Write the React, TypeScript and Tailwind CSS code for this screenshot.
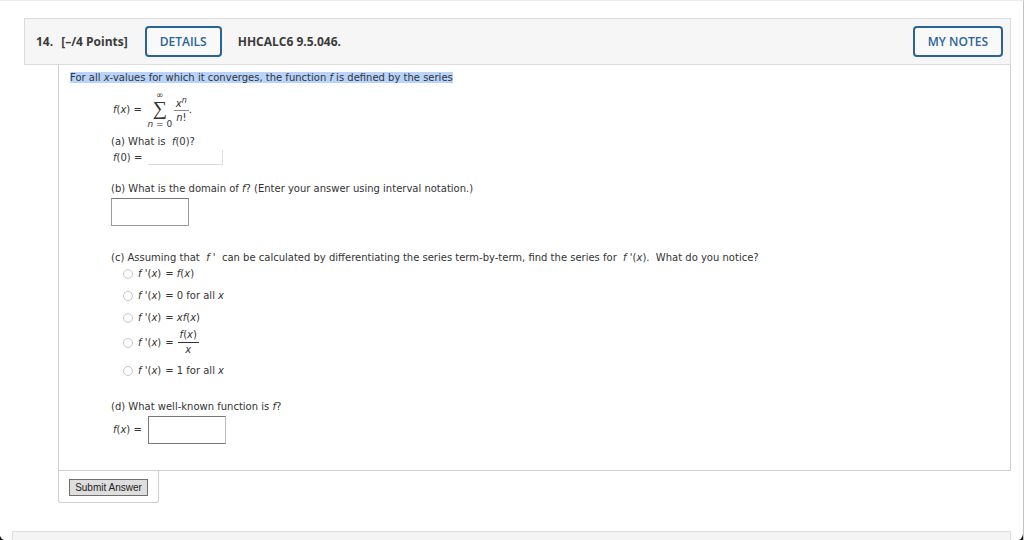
import type { ReactNode } from "react";

const V = ({ children }: { children: ReactNode }) => <i className="italic">{children}</i>;

const Fx = () => (
  <>
    <V>f</V>(<V>x</V>)
  </>
);

const FPrime = () => (
  <>
    <V>f</V> '(<V>x</V>)
  </>
);

const Sum = () => (
  <span className="flex w-6 flex-col items-center">
    <span className="text-[9px] leading-[9px]">∞</span>
    <span className="mb-1 font-['Liberation_Serif',serif] text-[20px] leading-4">∑</span>
    <span className="whitespace-nowrap text-[9px] leading-[9px]">
      <V>n</V> = 0
    </span>
  </span>
);

const choices: { id: string; body: ReactNode; tall?: boolean }[] = [
  { id: "fx", body: <>= <Fx /></> },
  { id: "zero", body: <>= 0 for all <V>x</V></> },
  { id: "xfx", body: <>= <V>x</V><Fx /></> },
  {
    id: "fx-over-x",
    tall: true,
    body: (
      <span className="inline-flex items-center gap-1">
        =
        <span className="flex flex-col text-center leading-[14px]">
          <span className="border-b border-[#333] px-0.5"><Fx /></span>
          <span><V>x</V></span>
        </span>
      </span>
    ),
  },
  { id: "one", body: <>= 1 for all <V>x</V></> },
];

const headerButton =
  "h-[31px] rounded-[4px] border-2 border-[#2a6496] bg-[#f9f9f9] px-[13px] text-[12px] font-semibold text-[#2a6496]";

const QuestionHeader = () => (
  <header className="flex h-[47px] items-center border border-[#dcdcdc] bg-[#f6f6f6] pl-[11px] pr-[7px] font-['Open_Sans',sans-serif] text-[12px] font-bold text-[#3b3b3b]">
    <span>14.</span>
    <span className="ml-2">[–/4 Points]</span>
    <button type="button" className={`${headerButton} ml-[17px]`}>DETAILS</button>
    <h2 className="ml-4">HHCALC6 9.5.046.</h2>
    <button type="button" className={`${headerButton} ml-auto`}>MY NOTES</button>
  </header>
);

export default function App() {
  return (
    <div className="relative flex h-screen flex-col overflow-hidden border-r border-t border-r-[#c4c4c4] border-t-[#ececec] bg-white font-['DejaVu_Sans',sans-serif] text-[10px] leading-4 text-[#333]">
      <main className="ml-6 mr-3 mt-[17px]">
        <QuestionHeader />
        <form className="ml-[34px]" onSubmit={(e) => e.preventDefault()}>
          <div className="border-x border-b border-[#cfcfcf] pb-[26px] pl-[11px] pt-[5px]">
            <p>
              <span className="bg-[#b8d4fb]">
                For all <V>x</V>-values for which it converges, the function <V>f</V> is defined by the series
              </span>
            </p>

            <div className="pl-[41px]">
              <div className="flex h-12 items-center pl-0.5">
                <span><Fx /> =</span>
                <span className="ml-1.5"><Sum /></span>
                <span className="ml-0.5 flex flex-col text-center leading-[13px]">
                  <span className="border-b border-[#888] px-0.5">
                    <V>x</V><sup className="text-[8px] leading-none"><V>n</V></sup>
                  </span>
                  <span><V>n</V>!</span>
                </span>
                <span>.</span>
              </div>

              <p>(a) What is&nbsp; <V>f</V>(0)?</p>
              <div className="flex items-start pl-0.5">
                <label htmlFor="part-a"><V>f</V>(0) =</label>
                <input id="part-a" className="ml-1.5 h-[15px] w-[75px] border-b border-r border-[#dcdcdc] px-1" />
              </div>

              <label htmlFor="part-b" className="mt-[15px] block">
                (b) What is the domain of <V>f</V>? (Enter your answer using interval notation.)
              </label>
              <input id="part-b" className="mt-px block h-7 w-[78px] border border-[#9a9a9a] border-t-[#777] px-1" />

              <fieldset className="mt-6">
                <legend>
                  (c) Assuming that&nbsp; <V>f</V> '&nbsp; can be calculated by differentiating the series
                  term-by-term, find the series for&nbsp; <FPrime />.&nbsp; What do you notice?
                </legend>
                <div className="flex flex-col gap-1.5 pl-3">
                  {choices.map((c) => (
                    <label key={c.id} className={c.tall ? "-mt-1 flex items-center" : "flex items-center"}>
                      <input
                        type="radio"
                        name="part-c"
                        value={c.id}
                        className="mr-[5px] size-[10px] appearance-none rounded-full border border-[#c8c8c8] checked:bg-[#2a6496]"
                      />
                      <span className="flex items-center gap-1">
                        <span><FPrime /></span>
                        <span>{c.body}</span>
                      </span>
                    </label>
                  ))}
                </div>
              </fieldset>

              <p className="mt-5">(d) What well-known function is <V>f</V>?</p>
              <div className="mt-px flex items-center pl-0.5">
                <label htmlFor="part-d"><Fx /> =</label>
                <input id="part-d" className="ml-1.5 h-7 w-[78px] border border-[#777] border-r-[#bbb] px-1" />
              </div>
            </div>
          </div>

          <div className="flex h-8 w-[101px] items-center rounded-b-[3px] border-x border-b border-[#cfcfcf] pl-[10px] pt-0.5">
            <button
              type="submit"
              className="h-[17px] w-[79px] whitespace-nowrap border border-[#6f6f6f] bg-[#dedede] text-center font-['Liberation_Sans',sans-serif] text-[10px] leading-none text-[#222]"
            >
              Submit Answer
            </button>
          </div>
        </form>
      </main>

      <div className="ml-3 mr-3 mt-7 flex-1 border border-b-0 border-[#dedede] bg-[#f4f4f4] shadow-md" />
      <svg className="absolute bottom-0 left-0" width="4" height="4" aria-hidden="true">
        <path d="M0 0Q1 3 4 4H0Z" fill="#111" />
      </svg>
      <svg className="absolute bottom-0 right-0" width="4" height="6" aria-hidden="true">
        <path d="M4 0Q3 5 0 6H4Z" fill="#111" />
      </svg>
    </div>
  );
}
